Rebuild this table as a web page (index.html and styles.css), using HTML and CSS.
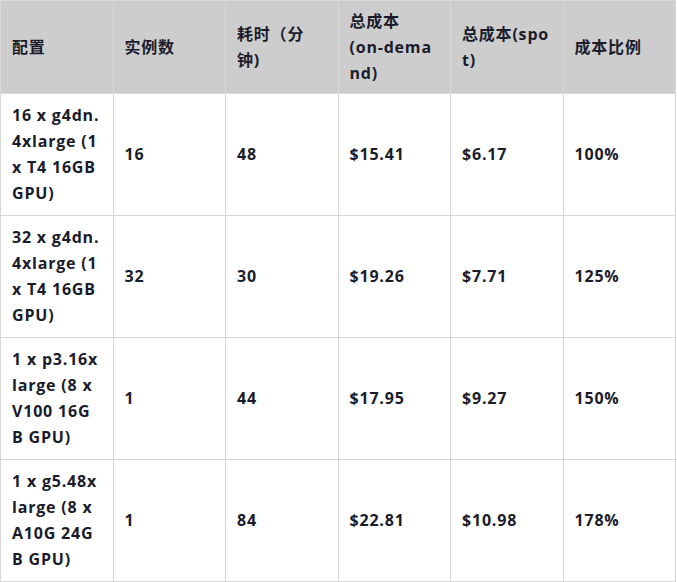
FILE: index.html
```html
<!DOCTYPE html>
<html lang="zh">
<head>
<meta charset="utf-8">
<link rel="stylesheet" href="styles.css">
</head>
<body>
<table class="cost-table">
  <thead>
    <tr>
      <th>配置</th>
      <th>实例数</th>
      <th>耗时（分钟)</th>
      <th>总成本<br>(on-demand)</th>
      <th>总成本(spot)</th>
      <th>成本比例</th>
    </tr>
  </thead>
  <tbody>
    <tr>
      <td>16 x g4dn.4xlarge (1 x T4 16GB GPU)</td>
      <td>16</td>
      <td>48</td>
      <td>$15.41</td>
      <td>$6.17</td>
      <td>100%</td>
    </tr>
    <tr>
      <td>32 x g4dn.4xlarge (1 x T4 16GB GPU)</td>
      <td>32</td>
      <td>30</td>
      <td>$19.26</td>
      <td>$7.71</td>
      <td>125%</td>
    </tr>
    <tr>
      <td>1 x p3.16xlarge (8 x V100 16GB GPU)</td>
      <td>1</td>
      <td>44</td>
      <td>$17.95</td>
      <td>$9.27</td>
      <td>150%</td>
    </tr>
    <tr>
      <td>1 x g5.48xlarge (8 x A10G 24GB GPU)</td>
      <td>1</td>
      <td>84</td>
      <td>$22.81</td>
      <td>$10.98</td>
      <td>178%</td>
    </tr>
  </tbody>
</table>
</body>
</html>
```
FILE: styles.css
```css
html, body {
  margin: 0;
  padding: 0;
  background: #fff;
}
.cost-table {
  border-collapse: collapse;
  table-layout: fixed;
  width: 676px;
  font-family: "Open Sans", "Noto Sans CJK SC", sans-serif;
  font-size: 16px;
  font-weight: 700;
  letter-spacing: 0.8px;
  color: #1a1c2c;
  line-height: 26px;
}
.cost-table th,
.cost-table td {
  border: 1px solid #d6d6d6;
  padding: 7px 11px;
  text-align: left;
  vertical-align: middle;
  word-break: break-all;
}
.cost-table th {
  background: #cdcdcd;
  border-color: #d9d9d9;
}
.cost-table td {
  padding: 8px 11px 9px;
}
```
